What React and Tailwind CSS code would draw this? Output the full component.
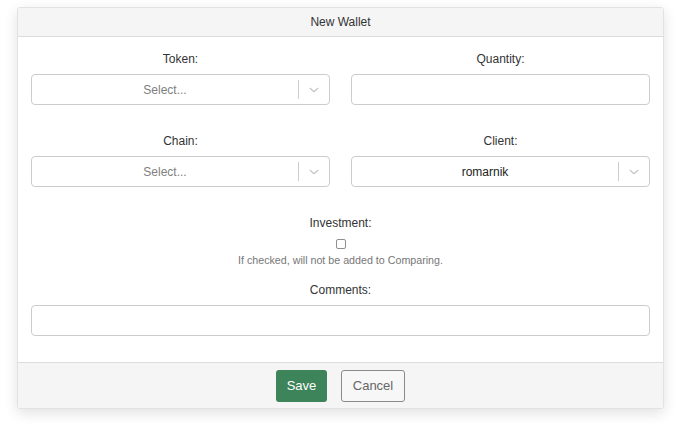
import React from "react";

function Chevron() {
  return (
    <svg width="14" height="14" viewBox="0 0 20 20" className="text-[#c4c4c4]">
      <path
        d="M4.5 7.5 L10 12.5 L15.5 7.5"
        fill="none"
        stroke="currentColor"
        strokeWidth="1.6"
        strokeLinecap="round"
        strokeLinejoin="round"
      />
    </svg>
  );
}

function SelectBox({ value, placeholder = "Select..." }) {
  return (
    <div className="flex h-[31px] items-center rounded-[4px] border border-[#cccccc] bg-white">
      <div
        className={`flex-1 text-center text-[12px] ${
          value ? "text-[#222]" : "text-[#808080]"
        }`}
      >
        {value || placeholder}
      </div>
      <div className="h-[19px] w-px bg-[#cccccc]" />
      <div className="flex w-[30px] items-center justify-center">
        <Chevron />
      </div>
    </div>
  );
}

function Field({ label, children }) {
  return (
    <div className="flex flex-col">
      <div className="mb-[7px] h-[16px] text-center text-[12px] leading-[16px] text-[#333]">{label}</div>
      {children}
    </div>
  );
}

export default function App() {
  return (
    <div
      className="min-h-[429px] bg-white pt-[7px] pl-[17px]"
      style={{ fontFamily: '"Liberation Sans", Arial, sans-serif' }}
    >
      <div className="w-[647px] overflow-hidden rounded-[3px] border border-[#e2e2e2] bg-white shadow-[0_4px_14px_rgba(0,0,0,0.12)]">
        {/* header */}
        <div className="flex h-[29px] items-center justify-center border-b border-[#dcdcdc] bg-[#f5f5f5] text-[12px] text-[#333]">
          New Wallet
        </div>

        {/* body */}
        <div className="px-[13px] pt-[14px] pb-[26px]">
          <div className="grid grid-cols-2 gap-x-[21px] gap-y-[28px]">
            <Field label="Token:">
              <SelectBox />
            </Field>
            <Field label="Quantity:">
              <div className="h-[31px] rounded-[4px] border border-[#cccccc] bg-white" />
            </Field>
            <Field label="Chain:">
              <SelectBox />
            </Field>
            <Field label="Client:">
              <SelectBox value="romarnik" />
            </Field>
          </div>

          <div className="mt-[28px] flex flex-col items-center">
            <div className="h-[16px] text-[12px] leading-[16px] text-[#333]">Investment:</div>
            <div className="mt-[8px] h-[10px] w-[10px] rounded-[2px] border border-[#8f8f8f] bg-white" />
            <div className="mt-[4px] text-[10.7px] leading-[14px] text-[#777]">
              If checked, will not be added to Comparing.
            </div>
          </div>

          <div className="mt-[15px]">
            <Field label="Comments:">
              <div className="h-[31px] rounded-[4px] border border-[#cccccc] bg-white" />
            </Field>
          </div>
        </div>

        {/* footer */}
        <div className="flex h-[46px] items-center justify-center gap-[14px] border-t border-[#dcdcdc] bg-[#f5f5f5]">
          <button className="h-[32px] w-[51px] rounded-[3px] bg-[#3d845a] text-[13px] text-white">
            Save
          </button>
          <button className="h-[32px] w-[64px] rounded-[3px] border border-[#8a8a8a] bg-[#f7f7f7] text-[13px] text-[#666]">
            Cancel
          </button>
        </div>
      </div>
    </div>
  );
}
